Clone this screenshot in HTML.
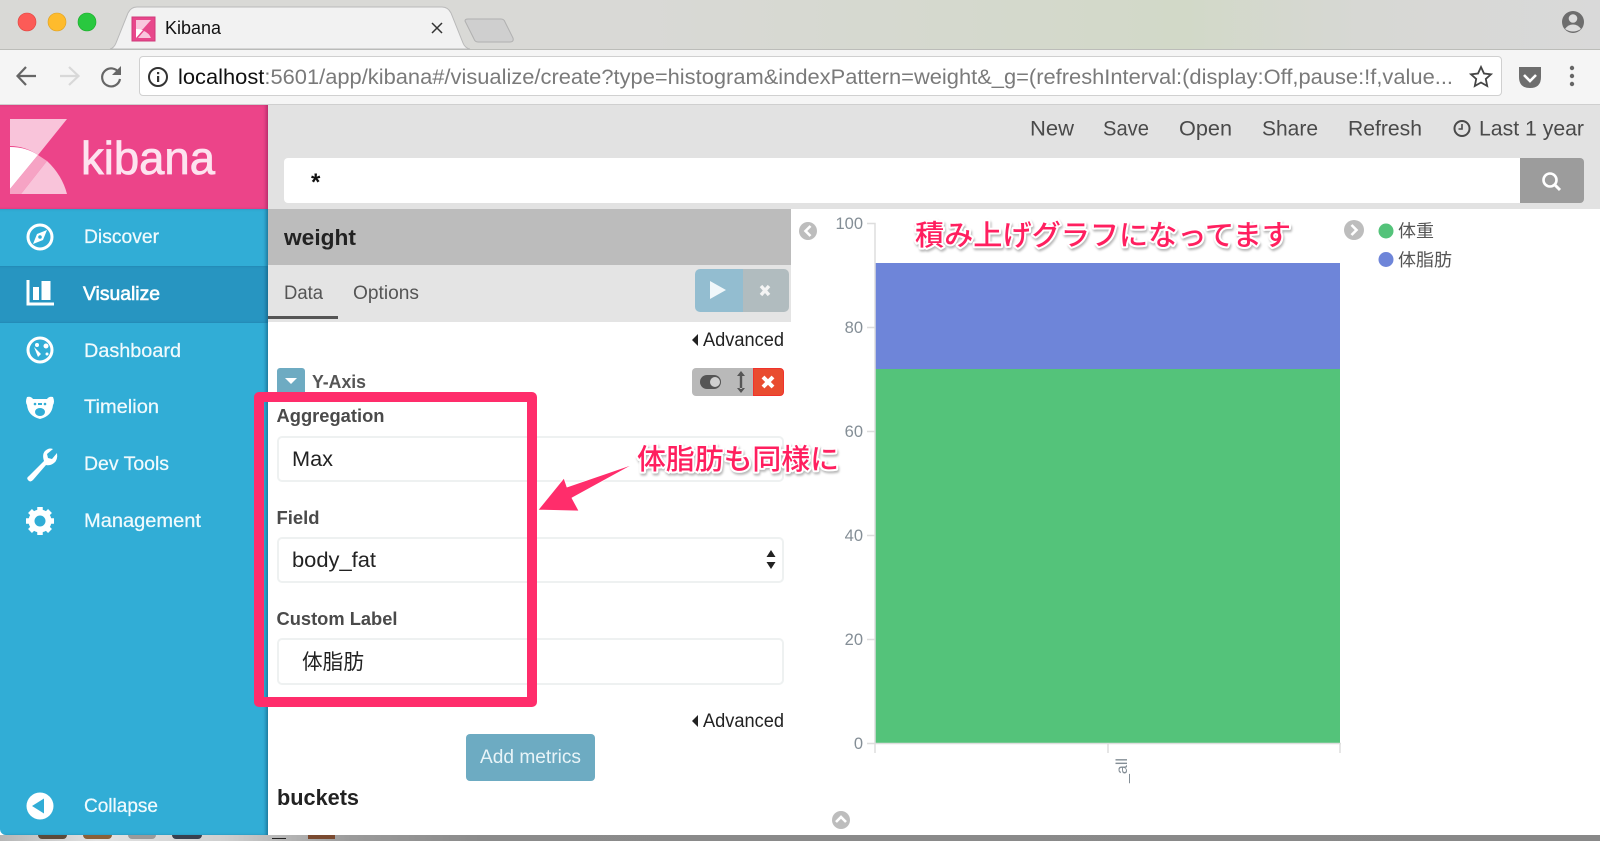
<!DOCTYPE html>
<html lang="ja"><head><meta charset="utf-8"><title>Kibana</title>
<style>
*{box-sizing:border-box}
html,body{margin:0;padding:0;width:1600px;height:841px;overflow:hidden;background:#fff;font-family:"Liberation Sans","Noto Sans CJK JP",sans-serif}
.a{position:absolute}
svg{position:absolute;left:0;top:0}
text{font-family:"Liberation Sans","Noto Sans CJK JP",sans-serif}
</style></head><body>
<div class="a" style="left:0;top:835px;width:1600px;height:6px;background:linear-gradient(90deg,#b5b5b5,#e2e2e2 6%,#cfcfcf 14%,#9a9a9a 22%,#8b8b8b 30%,#888 100%)"></div>
<div class="a" style="left:38px;top:835px;width:29px;height:4px;background:#5b4a3a;border-radius:0 0 8px 8px"></div>
<div class="a" style="left:83px;top:835px;width:29px;height:4px;background:#8a6038;border-radius:0 0 8px 8px"></div>
<div class="a" style="left:128px;top:835px;width:28px;height:4px;background:#9a9a9a;border-radius:0 0 8px 8px"></div>
<div class="a" style="left:172px;top:835px;width:30px;height:4px;background:#38404f;border-radius:0 0 8px 8px"></div>
<div class="a" style="left:272px;top:838px;width:14px;height:1px;background:#222"></div>
<div class="a" style="left:308px;top:835px;width:27px;height:4px;background:#7a4a30"></div>
<div class="a" style="left:0;top:0;width:1600px;height:835px;background:#fff;border-radius:0 0 6px 6px;overflow:hidden">
  <div class="a" style="left:0;top:0;width:1600px;height:50px;background:linear-gradient(90deg,#d9d9d6 0,#d9d9d6 40%,#d2d9c8 74%,#d7d8d4 85%,#d9d9d9 100%);border-bottom:1px solid #bcbdb9"></div>
  <div class="a" style="left:0;top:50px;width:1600px;height:55px;background:#f5f5f5;border-bottom:1px solid #cfcfcf"></div>
  <div class="a" style="left:139px;top:56px;width:1363px;height:40px;background:#fff;border:1px solid #d0d0d0;border-radius:4px"></div>
  <div class="a" style="left:268px;top:105px;width:1332px;height:104px;background:#e2e2e2"></div>
  <div class="a" style="left:284px;top:158px;width:1236px;height:45px;background:#fff;border-radius:4px 0 0 4px"></div>
  <div class="a" style="left:1520px;top:158px;width:64px;height:45px;background:#9c9c9c;border-radius:0 4px 4px 0"></div>
  <div class="a" style="left:0;top:105px;width:268px;height:104px;background:#ec4489;box-shadow:inset -3px 0 3px -1px rgba(120,20,70,.45)"></div>
  <div class="a" style="left:0;top:209px;width:268px;height:626px;background:#31add6;box-shadow:inset -3px 0 3px -1px rgba(10,70,100,.5)"></div>
  <div class="a" style="left:0;top:266px;width:268px;height:57px;background:#2795c1;box-shadow:inset -3px 0 3px -1px rgba(10,70,100,.5)"></div>
  <div class="a" style="left:268px;top:209px;width:523px;height:56px;background:#bcbcbc"></div>
  <div class="a" style="left:268px;top:265px;width:523px;height:57px;background:#e4e4e4"></div>
  <div class="a" style="left:268px;top:316px;width:70px;height:3px;background:#555"></div>
  <div class="a" style="left:695px;top:269px;width:48px;height:43px;background:#93bdd0;border-radius:5px 0 0 5px"></div>
  <div class="a" style="left:743px;top:269px;width:46px;height:43px;background:#b1bcbf;border-radius:0 5px 5px 0"></div>
  <div class="a" style="left:277px;top:368px;width:28px;height:30px;background:#6eabc2;border-radius:3px"></div>
  <div class="a" style="left:692px;top:368px;width:62px;height:28px;background:#b9b9b9;border-radius:4px 0 0 4px"></div>
  <div class="a" style="left:753px;top:368px;width:31px;height:28px;background:#e94c30;border:1px solid #f0322c;border-radius:0 4px 4px 0"></div>
  <div class="a" style="left:277px;top:436px;width:507px;height:46px;background:#fff;border:2px solid #eef1f1;border-radius:5px"></div>
  <div class="a" style="left:277px;top:537px;width:507px;height:46px;background:#fff;border:2px solid #eef1f1;border-radius:5px"></div>
  <div class="a" style="left:277px;top:638px;width:507px;height:47px;background:#fff;border:2px solid #eef1f1;border-radius:5px"></div>
  <div class="a" style="left:466px;top:734px;width:129px;height:47px;background:#6dabc2;border-radius:4px"></div>
  <div class="a" style="left:875px;top:263px;width:465px;height:106px;background:#6e85d9"></div>
  <div class="a" style="left:875px;top:369px;width:465px;height:374px;background:#54c37a"></div>
</div>

<svg width="1600" height="841" viewBox="0 0 1600 841">
  <!-- tabs -->
  <path d="M110 49 Q114 48 116 43 L128 13 Q131 7 137 7 L442 7 Q448 7 451 13 L463 43 Q465 48 470 49 Z" fill="#f2f2f2" stroke="#b9b9b9"/>
  <path d="M465 21 Q465 19 468 19 L501 19 Q504 19 505 22 L513 38 Q514 42 510 42 L478 42 Q475 42 474 39 Z" fill="#cfcfcf" stroke="#b0b0b0"/>
  <circle cx="27" cy="22" r="9" fill="#fc5b57" stroke="#e0443e" stroke-width=".6"/>
  <circle cx="57" cy="22" r="9" fill="#febb2c" stroke="#dea123" stroke-width=".6"/>
  <circle cx="87" cy="22" r="9" fill="#29c83f" stroke="#1aab29" stroke-width=".6"/>
  <!-- favicon -->
  <rect x="132" y="17" width="23" height="24" fill="#e8478b" stroke="#d03a7b"/>
  <path d="M136 20H151L143 29L136 32Z" fill="#f9c6dd"/><path d="M136 29Q140 29 143 30L136 38Z" fill="#fff"/><path d="M144 31Q149 33 151 38H138Z" fill="#f9c6dd"/>
  <path d="M432 23L442 33M442 23L432 33" stroke="#333" stroke-width="1.5"/>
  <!-- nav icons -->
  <path d="M36 76H18M26 67L17.5 76L26 85" fill="none" stroke="#666" stroke-width="2.2"/>
  <path d="M60 76H78M69 67L78.5 76L69 85" fill="none" stroke="#d8d8d8" stroke-width="2.2"/>
  <path d="M119 73A9 9 0 1 0 120 79" fill="none" stroke="#666" stroke-width="2.2"/><path d="M121 66V75H112Z" fill="#666"/>
  <circle cx="158" cy="77" r="9" fill="none" stroke="#333" stroke-width="2"/><rect x="157" y="76" width="2.2" height="6" fill="#333"/><rect x="157" y="72" width="2.2" height="2.2" fill="#333"/>
  <path d="M1481 67L1484 73.5L1491 74.3L1485.8 79L1487.2 86L1481 82.5L1474.8 86L1476.2 79L1471 74.3L1478 73.5Z" fill="none" stroke="#444" stroke-width="1.8"/>
  <path d="M1519 67H1541V77Q1541 88 1530 88Q1519 88 1519 77Z" fill="#6e6e6e"/><path d="M1524 75L1530 81L1536 75" fill="none" stroke="#fff" stroke-width="2.6"/>
  <circle cx="1572" cy="68" r="2.2" fill="#666"/><circle cx="1572" cy="76" r="2.2" fill="#666"/><circle cx="1572" cy="84" r="2.2" fill="#666"/>
  <circle cx="1573" cy="22" r="11" fill="#6d6d6d"/><circle cx="1573" cy="18.5" r="4.3" fill="#dcdcdc"/><path d="M1565 29Q1568 24.5 1573 24.5Q1578 24.5 1581 29Q1577 31.5 1573 31.5Q1569 31.5 1565 29Z" fill="#dcdcdc"/>

  <!-- logo -->
  <path d="M10 119H67L38 155Q25 146 10 146Z" fill="#f9c4da"/>
  <path d="M10 147Q26 147 38 155L10 189Z" fill="#fff"/>
  <path d="M38 155L47 161L21 194H10V189Z" fill="#f6a3c4"/>
  <path d="M47 161Q62 175 67 194H21Z" fill="#f9c4da"/>
  <text x="81" y="174" font-size="46" fill="#fde3ef" stroke="#fde3ef" stroke-width=".8" textLength="134" lengthAdjust="spacingAndGlyphs">kibana</text>

  <!-- sidebar icons -->
  <g fill="none" stroke="#fff">
    <circle cx="40" cy="237" r="12" stroke-width="3"/>
    <path d="M47 230L43 240L33 244L37 234Z" fill="#fff" stroke="none"/>
    <circle cx="40" cy="350" r="12" stroke-width="3"/>
  </g>
  <circle cx="40" cy="237" r="1.8" fill="#31add6"/>
  <path d="M28 280V304H54" fill="none" stroke="#fff" stroke-width="3"/>
  <rect x="33" y="287" width="6" height="13" fill="#fff"/><rect x="41.5" y="281" width="9" height="19" fill="#fff"/>
  <circle cx="46" cy="346" r="2.5" fill="#fff"/><circle cx="37" cy="345" r="2" fill="#fff"/><path d="M34 347L41 354L38 357Z" fill="#fff"/><circle cx="47" cy="354" r="1.5" fill="#fff"/>
  <path d="M27 397Q31 396 33 399H47Q49 396 53 397Q55 402 53 405Q52 416 40 419Q28 416 27 405Q25 402 27 397Z" fill="#fff"/>
  <ellipse cx="40" cy="412" rx="5" ry="4" fill="#31add6"/><circle cx="35" cy="404" r="1.3" fill="#31add6"/><circle cx="45" cy="404" r="1.3" fill="#31add6"/><rect x="38" y="403" width="4" height="2" fill="#31add6"/>
  <path d="M29 476L44 461Q41 452 48 449Q50 448 53 449L47 454L48 458L52 459L57 453Q58 460 54 463Q50 466 46 465L33 480Q30 483 28 480Q26 478 29 476Z" fill="#fff"/>
  <circle cx="40" cy="521" r="8.5" fill="none" stroke="#fff" stroke-width="6"/>
  <path d="M40 507V511M40 531V535M26 521H30M50 521H54M30 511L33 514M47 528L50 531M50 511L47 514M33 528L30 531" stroke="#fff" stroke-width="5.5"/>
  <circle cx="40" cy="806" r="13.5" fill="#fff"/><path d="M32 806L44 798.5V813.5Z" fill="#31add6"/>
  <!-- sidebar text -->
  <g fill="#f0fafd" font-size="19.5" stroke="#f0fafd" stroke-width=".25">
    <text x="84" y="243" textLength="75" lengthAdjust="spacingAndGlyphs">Discover</text>
    <text x="83" y="300" textLength="77" lengthAdjust="spacingAndGlyphs" fill="#fff" stroke="#fff" stroke-width=".6">Visualize</text>
    <text x="84" y="357" textLength="97" lengthAdjust="spacingAndGlyphs">Dashboard</text>
    <text x="84" y="413" textLength="75" lengthAdjust="spacingAndGlyphs">Timelion</text>
    <text x="84" y="470" textLength="85" lengthAdjust="spacingAndGlyphs">Dev Tools</text>
    <text x="84" y="527" textLength="117" lengthAdjust="spacingAndGlyphs">Management</text>
    <text x="84" y="812" textLength="74" lengthAdjust="spacingAndGlyphs">Collapse</text>
  </g>
  <!-- browser text -->
  <text x="165" y="34" font-size="18" fill="#111" textLength="56" lengthAdjust="spacingAndGlyphs">Kibana</text>
  <text x="178" y="84" font-size="21" fill="#7a7a7a" textLength="1275" lengthAdjust="spacingAndGlyphs"><tspan fill="#111">localhost</tspan>:5601/app/kibana#/visualize/create?type=histogram&amp;indexPattern=weight&amp;_g=(refreshInterval:(display:Off,pause:!f,value...</text>
  <!-- top nav -->
  <g fill="#4a4a4a" font-size="21.5">
    <text x="1030" y="135.5" textLength="44" lengthAdjust="spacingAndGlyphs">New</text>
    <text x="1103" y="135.5" textLength="46" lengthAdjust="spacingAndGlyphs">Save</text>
    <text x="1179" y="135.5" textLength="53" lengthAdjust="spacingAndGlyphs">Open</text>
    <text x="1262" y="135.5" textLength="56" lengthAdjust="spacingAndGlyphs">Share</text>
    <text x="1348" y="135.5" textLength="74" lengthAdjust="spacingAndGlyphs">Refresh</text>
    <text x="1479" y="135.5" textLength="105" lengthAdjust="spacingAndGlyphs">Last 1 year</text>
  </g>
  <circle cx="1462" cy="128.5" r="7.5" fill="none" stroke="#4a4a4a" stroke-width="2"/><path d="M1462 124V129H1458.5" fill="none" stroke="#4a4a4a" stroke-width="1.6"/>
  <text x="311" y="190" font-size="24" fill="#111" font-weight="bold">*</text>
  <circle cx="1550" cy="180" r="6.5" fill="none" stroke="#fff" stroke-width="2.6"/><path d="M1555 185L1560 190" stroke="#fff" stroke-width="3"/>
  <!-- panel -->
  <text x="284" y="245" font-size="22" font-weight="bold" fill="#222" textLength="72" lengthAdjust="spacingAndGlyphs">weight</text>
  <text x="284" y="299" font-size="19" fill="#555" textLength="39" lengthAdjust="spacingAndGlyphs">Data</text>
  <text x="353" y="299" font-size="19" fill="#555" textLength="66" lengthAdjust="spacingAndGlyphs">Options</text>
  <path d="M711 282L727 291L711 300Z" fill="#f0f7fa" transform="translate(-1,-1)"/>
  <path d="M761 286L769 295M769 286L761 295" stroke="#f4f4f4" stroke-width="3.4"/>
  <path d="M692 340L698 334V346Z" fill="#222"/><path d="M692 721L698 715V727Z" fill="#222"/>
  <text x="703" y="346" font-size="19" fill="#222" textLength="81" lengthAdjust="spacingAndGlyphs">Advanced</text>
  <text x="703" y="727" font-size="19" fill="#222" textLength="81" lengthAdjust="spacingAndGlyphs">Advanced</text>
  <path d="M285 378H297L291 384Z" fill="#fff"/>
  <text x="312" y="388" font-size="18.5" font-weight="bold" fill="#555" textLength="54" lengthAdjust="spacingAndGlyphs">Y-Axis</text>
  <rect x="700" y="375" width="21" height="14" rx="7" fill="#555"/><circle cx="715" cy="382" r="5" fill="#d0d0d0"/>
  <path d="M741 371L745 376H737ZM741 393L745 388H737Z M739.8 375H742.2V389H739.8Z" fill="#555"/>
  <path d="M763 377L773 387M773 377L763 387" stroke="#fff" stroke-width="4"/>
  <text x="276.5" y="422" font-size="18.5" font-weight="bold" fill="#4a4a4a" textLength="108" lengthAdjust="spacingAndGlyphs">Aggregation</text>
  <text x="292" y="466" font-size="21" fill="#222" textLength="41" lengthAdjust="spacingAndGlyphs">Max</text>
  <text x="276.5" y="524" font-size="18.5" font-weight="bold" fill="#4a4a4a" textLength="43" lengthAdjust="spacingAndGlyphs">Field</text>
  <text x="292" y="567" font-size="21" fill="#222" textLength="84" lengthAdjust="spacingAndGlyphs">body_fat</text>
  <path d="M771 550L775.5 557H766.5ZM771 569L775.5 562H766.5Z" fill="#222"/>
  <text x="276.5" y="625" font-size="18.5" font-weight="bold" fill="#4a4a4a" textLength="121" lengthAdjust="spacingAndGlyphs">Custom Label</text>
  <text x="302" y="669" font-size="21" fill="#222" textLength="62" lengthAdjust="spacingAndGlyphs">体脂肪</text>
  <text x="480" y="763" font-size="19" fill="#e8f4f8" textLength="101" lengthAdjust="spacingAndGlyphs">Add metrics</text>
  <text x="277" y="805" font-size="22" font-weight="bold" fill="#222" textLength="82" lengthAdjust="spacingAndGlyphs">buckets</text>
  <!-- chart -->
  <g stroke="#ddd" stroke-width="1.5" fill="none">
    <path d="M867 223.5H875V743M867 327.5H875M867 431.5H875M867 535.5H875M867 639.5H875M867 743.5H1341M875 743V753M1108 743V753M1340 743V753"/>
  </g>
  <g fill="#848e96" font-size="16.5" text-anchor="end">
    <text x="863" y="229">100</text><text x="863" y="333">80</text><text x="863" y="437">60</text><text x="863" y="541">40</text><text x="863" y="645">20</text><text x="863" y="749">0</text>
  </g>
  <text transform="translate(1127,783) rotate(-90)" font-size="16" fill="#848e96" textLength="25" lengthAdjust="spacingAndGlyphs">_all</text>
  <circle cx="808" cy="231" r="9" fill="#bdbdbd"/><path d="M810.5 226L805.5 231L810.5 236" fill="none" stroke="#fff" stroke-width="2.6"/>
  <circle cx="1354" cy="230" r="10" fill="#bdbdbd"/><path d="M1351.5 225L1356.5 230L1351.5 235" fill="none" stroke="#fff" stroke-width="2.6"/>
  <circle cx="841" cy="820" r="9" fill="#bdbdbd"/><path d="M836 822L841 817L846 822" fill="none" stroke="#fff" stroke-width="2.6"/>
  <circle cx="1386" cy="231" r="7.5" fill="#54c37a"/><circle cx="1386" cy="259.5" r="7.5" fill="#6e85d9"/>
  <text x="1398" y="237" font-size="17.5" fill="#555" textLength="36" lengthAdjust="spacingAndGlyphs">体重</text>
  <text x="1398" y="266" font-size="17.5" fill="#555" textLength="54" lengthAdjust="spacingAndGlyphs">体脂肪</text>
  <!-- annotations -->
  <rect x="259" y="397" width="273" height="305" fill="none" stroke="#ff2d6b" stroke-width="10" stroke-linejoin="round"/>
  <path d="M538 510L564 478L567 487L634 464L572 498L579 511Z" fill="#ff2d6b" stroke="#fff" stroke-width=".8" stroke-linejoin="round"/>
  <g font-size="28.5" font-weight="500" fill="#ff1f5f" stroke="#fff" stroke-width="4" paint-order="stroke" stroke-linejoin="round" style="filter:drop-shadow(1px 2px 1px rgba(0,0,0,.28))">
    <text x="637" y="469" textLength="202" lengthAdjust="spacingAndGlyphs">体脂肪も同様に</text>
    <text x="915" y="245" textLength="376" lengthAdjust="spacingAndGlyphs">積み上げグラフになってます</text>
  </g>
</svg>
</body></html>
